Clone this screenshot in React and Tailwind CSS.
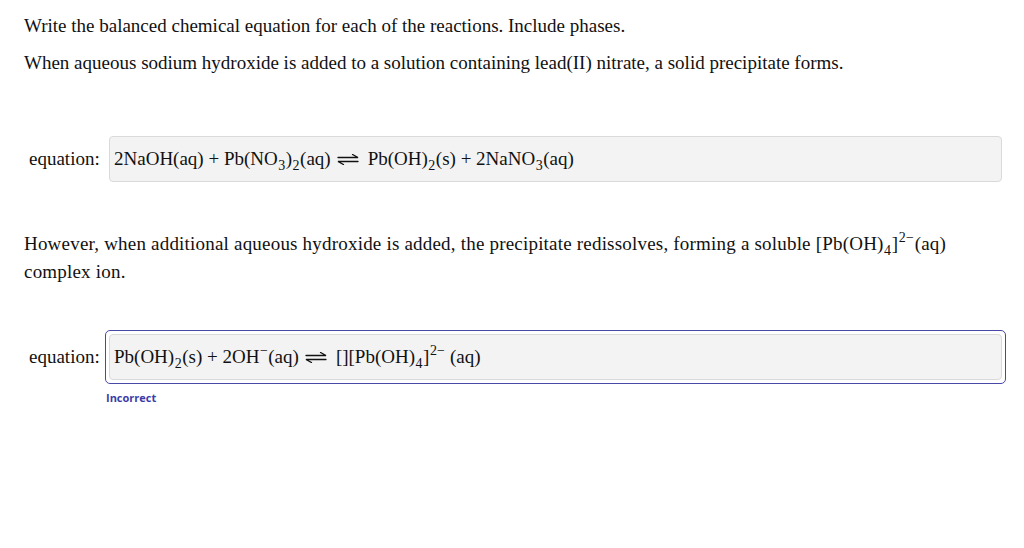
import React from "react";

function Arrow() {
  return (
    <svg width="22" height="11" viewBox="0 0 22 11" className="inline-block ml-[6px] mr-[9px] align-[1px]" fill="none" stroke="#111" strokeWidth="1.3" strokeLinecap="round">
      <path d="M1 3.5 H21 L15.5 0.5" />
      <path d="M21 7.5 H1 L6.5 10.5" />
    </svg>
  );
}

const Sub = ({ children }) => (
  <sub className="text-[14px] relative bottom-[-5px] align-baseline px-[0.5px]">{children}</sub>
);
const Sup = ({ children }) => (
  <sup className="text-[14px] relative top-[-8px] align-baseline px-[0.5px]">{children}</sup>
);

function Row({ active, children }) {
  return (
    <div className="flex items-center">
      <div className="w-[81px] pl-[5px] shrink-0 text-[19px]">equation:</div>
      <div
        className={
          "flex-1 p-[3px] rounded-[5px] border-[1.5px] " +
          (active ? "border-[#4848a6]" : "border-transparent")
        }
      >
        <div className="h-[46px] bg-[#f3f3f3] border border-[#dadada] rounded-[4px] flex items-center pl-[4px] whitespace-nowrap text-[19px]">
          {children}
        </div>
      </div>
    </div>
  );
}

export default function App() {
  return (
    <div
      className="w-[1024px] h-[548px] bg-white text-[#111] text-[19px] pl-6 pr-[18px] pt-[12px]"
      style={{ fontFamily: '"Liberation Serif", "Times New Roman", serif' }}
    >
      <p className="leading-[28px]">
        Write the balanced chemical equation for each of the reactions. Include phases.
      </p>
      <p className="leading-[28px] mt-[9px]">
        When aqueous sodium hydroxide is added to a solution containing lead(II) nitrate, a solid precipitate forms.
      </p>

      <div className="mt-[55px]">
        <Row>
          <span>2NaOH(aq) + Pb(NO<Sub>3</Sub>)<Sub>2</Sub>(aq)</span>
          <Arrow />
          <span>Pb(OH)<Sub>2</Sub>(s) + 2NaNO<Sub>3</Sub>(aq)</span>
        </Row>
      </div>

      <p className="leading-[28px] mt-[44px] text-[19px] tracking-[0.2px]">
        However, when additional aqueous hydroxide is added, the precipitate redissolves, forming a soluble [Pb(OH)<Sub>4</Sub>]<Sup>2−</Sup>(aq)
        <br />
        complex ion.
      </p>

      <div className="mt-[44px]">
        <Row active>
          <span>Pb(OH)<Sub>2</Sub>(s) + 2OH<Sup>−</Sup>(aq)</span>
          <Arrow />
          <span>[][Pb(OH)<Sub>4</Sub>]<Sup>2−</Sup> (aq)</span>
        </Row>
      </div>

      <div
        className="ml-[82px] mt-[6px] text-[11px] leading-[16px] font-bold text-[#3c3ca8]"
        style={{ fontFamily: '"Open Sans", "Liberation Sans", sans-serif' }}
      >
        Incorrect
      </div>
    </div>
  );
}
